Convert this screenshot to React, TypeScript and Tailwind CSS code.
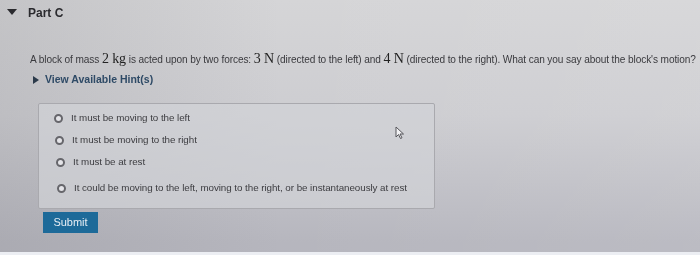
import React from "react";

const Radio = () => (
  <span className="inline-block w-[9px] h-[9px] rounded-full border-[2px] border-[#66666b] bg-[#e4e4e8] shrink-0" />
);

export default function App() {
  const options = [
    { t: "It must be moving to the left", pl: "pl-[2px]" },
    { t: "It must be moving to the right", pl: "pl-[3px]" },
    { t: "It must be at rest", pl: "pl-[4px]" },
    { t: "It could be moving to the left, moving to the right, or be instantaneously at rest", pl: "pl-[5px]" },
  ];
  const serif = { fontFamily: '"Liberation Serif", serif' };
  return (
    <div
      className="relative w-[700px] h-[255px] overflow-hidden bg-[linear-gradient(180deg,#d5d5d7_0%,#cdcdd1_45%,#b6b6be_95%)] text-[#3a3a3e] blur-[0.35px]"
      style={{ fontFamily: '"Liberation Sans", Arial, sans-serif' }}
    >
      <div className="absolute inset-0 bg-[linear-gradient(90deg,rgba(120,120,125,0.18)_0%,rgba(255,255,255,0)_40%,rgba(255,255,255,0.08)_100%)] pointer-events-none" />
      <div className="relative flex flex-col">
        <div className="flex items-center h-[24px] pl-[7px] pt-[1px]">
          <svg width="10" height="7" viewBox="0 0 10 7" className="mr-[11px]">
            <polygon points="0,0 10,0 5,6" fill="#2a2a2e" />
          </svg>
          <span className="text-[12px] font-semibold text-[#2a2a2e]">Part C</span>
        </div>
        <div className="mt-[27px] pl-[30px] text-[10.1px] leading-[16px] whitespace-nowrap tracking-[-0.1px]">
          A block of mass{" "}
          <span className="text-[14px] text-[#222]" style={serif}>2 kg</span>{" "}
          is acted upon by two forces:{" "}
          <span className="text-[14px] text-[#222]" style={serif}>3 N</span>{" "}
          (directed to the left) and{" "}
          <span className="text-[14px] text-[#222]" style={serif}>4 N</span>{" "}
          (directed to the right). What can you say about the block's motion?
        </div>
        <div className="flex items-center mt-[4px] pl-[33px] h-[16px]">
          <svg width="6" height="8" viewBox="0 0 6 8" className="mr-[6px]">
            <polygon points="0,0 6,4 0,8" fill="#2b3a4a" />
          </svg>
          <span className="text-[10.5px] font-bold text-[#2e4a66]">View Available Hint(s)</span>
        </div>
        <div className="mt-[15px] ml-[38px] w-[397px] h-[106px] border border-[#a9a9ae] rounded-[2px] bg-[#d2d3d7]/70 flex flex-col pt-[3px] pl-[13px]">
          {options.map((o, i) => (
            <div
              key={i}
              className={`flex items-center gap-[8px] text-[9.8px] tracking-[-0.05px] text-[#3c3c40] ${i === 3 ? "h-[30px]" : "h-[22px]"} ${o.pl}`}
            >
              <Radio />
              <span className="whitespace-nowrap">{o.t}</span>
            </div>
          ))}
        </div>
        <div className="mt-[3px] ml-[43px]">
          <div className="w-[55px] h-[21px] bg-[#1d6a99] flex items-center justify-center text-[11px] text-[#e8eef4]">
            Submit
          </div>
        </div>
      </div>
      <svg className="absolute left-[395px] top-[126px]" width="10" height="14" viewBox="0 0 10 14">
        <path d="M1 1 L1 11 L3.5 8.5 L5.5 12.5 L7 11.8 L5 8 L8.5 8 Z" fill="#f2f2f4" stroke="#55555a" strokeWidth="1" />
      </svg>
      <div className="absolute left-0 right-0 bottom-0 h-[3px] bg-[#eceef3]" />
    </div>
  );
}
